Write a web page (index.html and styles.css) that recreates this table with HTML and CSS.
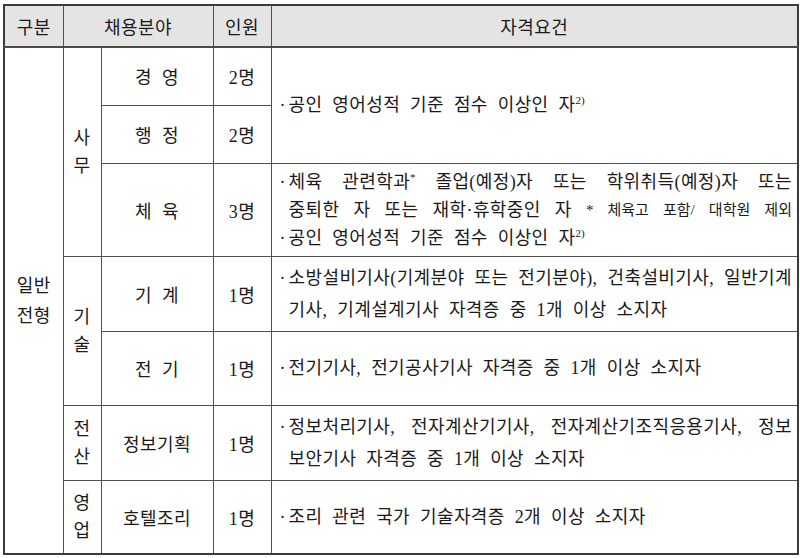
FILE: index.html
```html
<!DOCTYPE html>
<html lang="ko">
<head>
<meta charset="utf-8">
<title>채용분야 및 자격요건</title>
<link rel="stylesheet" href="styles.css">
</head>
<body>
<table class="recruit">
  <colgroup>
    <col class="c-type">
    <col class="c-cat">
    <col class="c-field">
    <col class="c-num">
    <col class="c-req">
  </colgroup>
  <thead>
    <tr class="r-head">
      <th>구분</th>
      <th colspan="2">채용분야</th>
      <th>인원</th>
      <th>자격요건</th>
    </tr>
  </thead>
  <tbody>
    <tr class="r-a">
      <td rowspan="7" class="type"><div class="stack stack-wide"><span>일반</span><span>전형</span></div></td>
      <td rowspan="3" class="cat"><div class="stack"><span>사</span><span>무</span></div></td>
      <td class="field">경 영</td>
      <td class="num">2명</td>
      <td rowspan="2" class="req">
        <div class="item"><span class="dot">·</span><div class="body"><div class="ln">공인 영어성적 기준 점수 이상인 자<sup>2)</sup></div></div></div>
      </td>
    </tr>
    <tr class="r-b">
      <td class="field">행 정</td>
      <td class="num">2명</td>
    </tr>
    <tr class="r-c">
      <td class="field">체 육</td>
      <td class="num">3명</td>
      <td class="req tight">
        <div class="item"><span class="dot">·</span><div class="body">
          <div class="ln fill"><span>체육</span><span>관련학과<sup>*</sup></span><span>졸업(예정)자</span><span>또는</span><span>학위취득(예정)자</span><span>또는</span></div>
          <div class="ln fill"><span>중퇴한</span><span>자</span><span>또는</span><span>재학·휴학중인</span><span>자</span><span class="note">*</span><span class="note">체육고</span><span class="note">포함/</span><span class="note">대학원</span><span class="note">제외</span></div>
        </div></div>
        <div class="item"><span class="dot">·</span><div class="body"><div class="ln">공인 영어성적 기준 점수 이상인 자<sup>2)</sup></div></div></div>
      </td>
    </tr>
    <tr class="r-d">
      <td rowspan="2" class="cat"><div class="stack"><span>기</span><span>술</span></div></td>
      <td class="field">기 계</td>
      <td class="num">1명</td>
      <td class="req">
        <div class="item"><span class="dot">·</span><div class="body">
          <div class="ln fill"><span>소방설비기사(기계분야</span><span>또는</span><span>전기분야),</span><span>건축설비기사,</span><span>일반기계</span></div>
          <div class="ln">기사, 기계설계기사 자격증 중 1개 이상 소지자</div>
        </div></div>
      </td>
    </tr>
    <tr class="r-e">
      <td class="field">전 기</td>
      <td class="num">1명</td>
      <td class="req">
        <div class="item"><span class="dot">·</span><div class="body"><div class="ln">전기기사, 전기공사기사 자격증 중 1개 이상 소지자</div></div></div>
      </td>
    </tr>
    <tr class="r-f">
      <td class="cat"><div class="stack"><span>전</span><span>산</span></div></td>
      <td class="field">정보기획</td>
      <td class="num">1명</td>
      <td class="req">
        <div class="item"><span class="dot">·</span><div class="body">
          <div class="ln fill"><span>정보처리기사,</span><span>전자계산기기사,</span><span>전자계산기조직응용기사,</span><span>정보</span></div>
          <div class="ln">보안기사 자격증 중 1개 이상 소지자</div>
        </div></div>
      </td>
    </tr>
    <tr class="r-g">
      <td class="cat"><div class="stack"><span>영</span><span>업</span></div></td>
      <td class="field">호텔조리</td>
      <td class="num">1명</td>
      <td class="req">
        <div class="item"><span class="dot">·</span><div class="body"><div class="ln">조리 관련 국가 기술자격증 2개 이상 소지자</div></div></div>
      </td>
    </tr>
  </tbody>
</table>
</body>
</html>
```
FILE: styles.css
```css
html, body {
  margin: 0;
  padding: 0;
  background: #ffffff;
}

body {
  font-family: "Liberation Serif", "Noto Sans CJK KR", serif;
  font-size: 18px;
  color: #1a1a1a;
  word-spacing: 5px;
  letter-spacing: 0.4px;
}

.recruit {
  margin: 4px 0 0 3px;
  width: 794px;
  border-collapse: collapse;
  table-layout: fixed;
  border: 2px solid #3a3a3a;
}

.c-type { width: 59px; }
.c-cat { width: 38px; }
.c-field { width: 112px; }
.c-num { width: 58px; }
.c-req { width: 527px; }

.recruit th,
.recruit td {
  border: 1px solid #505050;
  padding: 0;
  text-align: center;
  vertical-align: middle;
  font-weight: normal;
}

.r-head th {
  background: #e4e4e4;
  height: 40px;
  border-bottom: 2px solid #4a4a4a;
}

.r-a { height: 58px; }
.r-b { height: 58px; }
.r-c { height: 93px; }
.r-d { height: 75px; }
.r-e { height: 74px; }
.r-f { height: 75px; }
.r-g { height: 74px; }

.stack {
  display: flex;
  flex-direction: column;
  align-items: center;
  line-height: 28px;
}

.stack-wide {
  line-height: 30px;
}

.recruit td.req {
  text-align: left;
  padding: 0 5px 0 8px;
  line-height: 32px;
}

.recruit td.req.tight {
  line-height: 28px;
}

.item {
  display: flex;
}

.dot {
  flex: none;
  width: 9px;
}

.body {
  flex: 1;
  min-width: 0;
}

.ln {
  white-space: nowrap;
}

.ln.fill {
  display: flex;
  justify-content: space-between;
  word-spacing: 0;
}

.note {
  font-size: 15px;
  letter-spacing: 0;
}

sup {
  font-size: 11px;
  line-height: 0;
  vertical-align: 7px;
  word-spacing: 0;
  letter-spacing: 0;
}
```
